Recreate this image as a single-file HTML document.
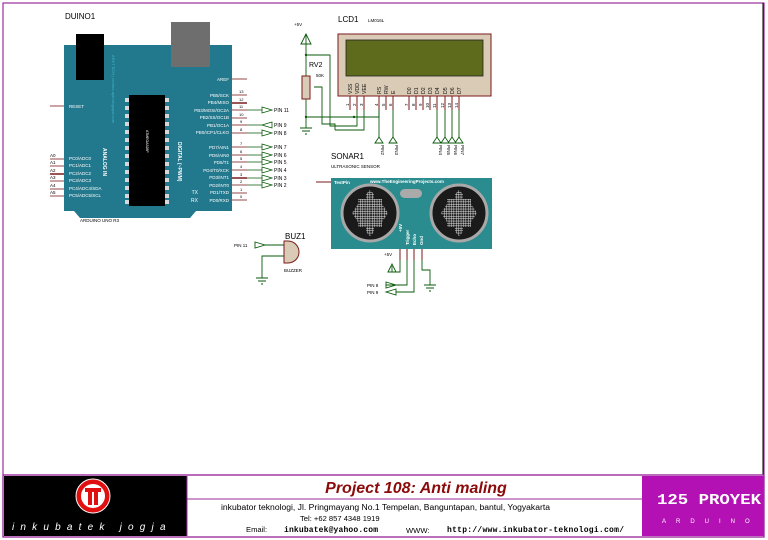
<!DOCTYPE html>
<html><head><meta charset="utf-8"><style>
html,body{margin:0;padding:0;background:#fff;width:768px;height:540px;overflow:hidden}
svg{display:block}
text{font-family:"Liberation Sans",sans-serif}
</style></head><body>
<svg width="768" height="540" viewBox="0 0 768 540" xmlns="http://www.w3.org/2000/svg">
<defs>
<pattern id="grid" width="2.4" height="2.4" patternUnits="userSpaceOnUse">
<rect width="2.4" height="2.4" fill="#222"/>
<path d="M0 0H2.4M0 0V2.4" stroke="#e8e8e8" stroke-width="0.9"/>
</pattern>
</defs>
<rect x="3" y="3" width="761" height="534" fill="#fff" stroke="#9b2d9b" stroke-width="1.2"/>
<line x1="763" y1="3" x2="763" y2="475" stroke="#000" stroke-width="1"/>

<!-- Arduino -->
<text x="65" y="19" font-size="8">DUINO1</text>
<path d="M64 45 H232 V211 H196 L190 218 H80 L74 211 H64 Z" fill="#22788c"/>
<rect x="76" y="34" width="28" height="46" fill="#000"/>
<rect x="171" y="22" width="39" height="45" fill="#6e6e6e"/>
<rect x="129" y="95" width="36" height="111" fill="#000"/>
<g fill="#d8d8d8">
<rect x="125" y="98" width="4" height="4"/><rect x="125" y="106" width="4" height="4"/><rect x="125" y="114" width="4" height="4"/><rect x="125" y="122" width="4" height="4"/><rect x="125" y="130" width="4" height="4"/><rect x="125" y="138" width="4" height="4"/><rect x="125" y="146" width="4" height="4"/><rect x="125" y="154" width="4" height="4"/><rect x="125" y="162" width="4" height="4"/><rect x="125" y="170" width="4" height="4"/><rect x="125" y="178" width="4" height="4"/><rect x="125" y="186" width="4" height="4"/><rect x="125" y="194" width="4" height="4"/><rect x="125" y="200" width="4" height="4"/>
<rect x="165" y="98" width="4" height="4"/><rect x="165" y="106" width="4" height="4"/><rect x="165" y="114" width="4" height="4"/><rect x="165" y="122" width="4" height="4"/><rect x="165" y="130" width="4" height="4"/><rect x="165" y="138" width="4" height="4"/><rect x="165" y="146" width="4" height="4"/><rect x="165" y="154" width="4" height="4"/><rect x="165" y="162" width="4" height="4"/><rect x="165" y="170" width="4" height="4"/><rect x="165" y="178" width="4" height="4"/><rect x="165" y="186" width="4" height="4"/><rect x="165" y="194" width="4" height="4"/><rect x="165" y="200" width="4" height="4"/>
</g>
<text transform="translate(112,55) rotate(90)" font-size="4" fill="#3fb8cc">ARKT ECH | techno-apk.blogspot.com</text>
<text transform="translate(103,148) rotate(90)" font-size="5" font-weight="bold" fill="#fff">ANALOG IN</text>
<text transform="translate(178,142) rotate(90)" font-size="5" font-weight="bold" fill="#fff">DIGITAL (~PWM)</text>
<text transform="translate(146,130) rotate(90)" font-size="3.5" fill="#fff">ATMEGA328P</text>
<g font-size="4.5" fill="#fff" text-anchor="end">
<text x="229" y="81">AREF</text>
<text x="229" y="97">PB5/SCK</text><text x="229" y="104">PB4/MISO</text><text x="229" y="112">PB3/MOSI/OC2A</text><text x="229" y="119">PB2/SS/OC1B</text><text x="229" y="127">PB1/OC1A</text><text x="229" y="134">PB0/ICP1/CLKO</text>
<text x="229" y="149">PD7/AIN1</text><text x="229" y="157">PD6/AIN0</text><text x="229" y="164">PD5/T1</text><text x="229" y="172">PD4/T0/XCK</text><text x="229" y="179">PD3/INT1</text><text x="229" y="187">PD2/INT0</text><text x="229" y="194">PD1/TXD</text><text x="229" y="202">PD0/RXD</text>
<text x="198" y="194" font-size="5">TX</text><text x="198" y="202" font-size="5">RX</text>
</g>
<g font-size="4.5" fill="#fff">
<text x="69" y="108">RESET</text>
<text x="69" y="160">PC0/ADC0</text><text x="69" y="167">PC1/ADC1</text><text x="69" y="175">PC2/ADC2</text><text x="69" y="182">PC3/ADC3</text><text x="69" y="190">PC4/ADC4/SDA</text><text x="69" y="197">PC5/ADC5/SCL</text>
</g>
<g font-size="4.5"><text x="50" y="157">A0</text><text x="50" y="164">A1</text><text x="50" y="172">A2</text><text x="50" y="179">A3</text><text x="50" y="187">A4</text><text x="50" y="194">A5</text>
<text x="80" y="222">ARDUINO UNO R3</text></g>
<g stroke="#7a1a1a" stroke-width="0.8">
<line x1="50" y1="106" x2="64" y2="106"/>
<line x1="50" y1="159" x2="64" y2="159"/><line x1="50" y1="166" x2="64" y2="166"/><line x1="50" y1="174" x2="64" y2="174" stroke-width="1.5"/><line x1="50" y1="181" x2="64" y2="181"/><line x1="50" y1="189" x2="64" y2="189"/><line x1="50" y1="196" x2="64" y2="196"/>
<line x1="232" y1="79" x2="247" y2="79"/>
<line x1="232" y1="95" x2="247" y2="95"/><line x1="232" y1="103" x2="247" y2="103" stroke-width="1.5"/><line x1="232" y1="110" x2="247" y2="110"/><line x1="232" y1="118" x2="247" y2="118"/><line x1="232" y1="125" x2="247" y2="125"/><line x1="232" y1="133" x2="247" y2="133"/>
<line x1="232" y1="147" x2="247" y2="147"/><line x1="232" y1="155" x2="247" y2="155"/><line x1="232" y1="162" x2="247" y2="162"/><line x1="232" y1="170" x2="247" y2="170"/><line x1="232" y1="178" x2="247" y2="178" stroke-width="1.5"/><line x1="232" y1="185" x2="247" y2="185"/><line x1="232" y1="193" x2="247" y2="193"/><line x1="232" y1="200" x2="247" y2="200"/>
</g>
<g font-size="4" fill="#000">
<text x="239" y="93">13</text><text x="239" y="101">12</text><text x="239" y="108">11</text><text x="239" y="116">10</text><text x="240" y="123">9</text><text x="240" y="131">8</text><text x="240" y="145">7</text><text x="240" y="153">6</text><text x="240" y="160">5</text><text x="240" y="168">4</text><text x="240" y="176">3</text><text x="240" y="183">2</text><text x="240" y="191">1</text><text x="240" y="198">0</text>
</g>
<g stroke="#0a5a0a" stroke-width="0.8" fill="none">
<path d="M247 110H262M262 107L272 110L262 113Z"/>
<path d="M247 125H262M272 122L262 125L272 128Z"/>
<path d="M247 133H262M262 130L272 133L262 136Z"/>
<path d="M247 147H262M262 144L272 147L262 150Z"/>
<path d="M247 155H262M262 152L272 155L262 158Z"/>
<path d="M247 162H262M262 159L272 162L262 165Z"/>
<path d="M247 170H262M262 167L272 170L262 173Z"/>
<path d="M247 178H262M262 175L272 178L262 181Z"/>
<path d="M247 185H262M262 182L272 185L262 188Z"/>
</g>
<g font-size="5"><text x="274" y="112">PIN 11</text><text x="274" y="127">PIN 9</text><text x="274" y="135">PIN 8</text><text x="274" y="149">PIN 7</text><text x="274" y="157">PIN 6</text><text x="274" y="164">PIN 5</text><text x="274" y="172">PIN 4</text><text x="274" y="180">PIN 3</text><text x="274" y="187">PIN 2</text></g>

<!-- LCD -->
<text x="338" y="22" font-size="8">LCD1</text><text x="368" y="22" font-size="4.5">LM016L</text>
<rect x="338" y="34" width="153" height="62" fill="#d9cbb5" stroke="#7a1a1a" stroke-width="1"/>
<rect x="346" y="40" width="137" height="36" fill="#5e6b1c" stroke="#222" stroke-width="0.8"/>
<g font-size="5.2" fill="#111">
<text transform="translate(352,94) rotate(-90)">VSS</text><text transform="translate(359,94) rotate(-90)">VDD</text><text transform="translate(366,94) rotate(-90)">VEE</text>
<text transform="translate(381,94) rotate(-90)">RS</text><text transform="translate(388,94) rotate(-90)">RW</text><text transform="translate(395,94) rotate(-90)">E</text>
<text transform="translate(411,94) rotate(-90)">D0</text><text transform="translate(418,94) rotate(-90)">D1</text><text transform="translate(425,94) rotate(-90)">D2</text><text transform="translate(432,94) rotate(-90)">D3</text><text transform="translate(439,94) rotate(-90)">D4</text><text transform="translate(447,94) rotate(-90)">D5</text><text transform="translate(454,94) rotate(-90)">D6</text><text transform="translate(461,94) rotate(-90)">D7</text>
</g>
<g stroke="#7a1a1a" stroke-width="1">
<line x1="350" y1="96" x2="350" y2="110"/><line x1="357" y1="96" x2="357" y2="110"/><line x1="364" y1="96" x2="364" y2="110"/>
<line x1="379" y1="96" x2="379" y2="110"/><line x1="386" y1="96" x2="386" y2="110"/><line x1="393" y1="96" x2="393" y2="110"/>
<line x1="409" y1="96" x2="409" y2="110"/><line x1="416" y1="96" x2="416" y2="110"/><line x1="423" y1="96" x2="423" y2="110"/><line x1="430" y1="96" x2="430" y2="110"/><line x1="437" y1="96" x2="437" y2="110"/><line x1="445" y1="96" x2="445" y2="110"/><line x1="452" y1="96" x2="452" y2="110"/><line x1="459" y1="96" x2="459" y2="110"/>
</g>
<g font-size="4.5"><text transform="translate(349,106) rotate(-90)">1</text><text transform="translate(356,106) rotate(-90)">2</text><text transform="translate(363,106) rotate(-90)">3</text><text transform="translate(378,106) rotate(-90)">4</text><text transform="translate(385,106) rotate(-90)">5</text><text transform="translate(392,106) rotate(-90)">6</text><text transform="translate(408,106) rotate(-90)">7</text><text transform="translate(415,106) rotate(-90)">8</text><text transform="translate(422,106) rotate(-90)">9</text><text transform="translate(429,108) rotate(-90)">10</text><text transform="translate(436,108) rotate(-90)">11</text><text transform="translate(444,108) rotate(-90)">12</text><text transform="translate(451,108) rotate(-90)">13</text><text transform="translate(458,108) rotate(-90)">14</text></g>
<g stroke="#0a5a0a" stroke-width="0.9" fill="none">
<path d="M306 34V117M301 44L306 34L311 44Z"/>
<path d="M306 55H330V126H357V110"/>
<path d="M306 117H379V110"/>
<path d="M364 110V130H335"/>
<path d="M314 87H322V124H335V130"/>
<path d="M306 117V128M300 128H312M302 131H310M305 134H307"/>
<path d="M379 110V137M393 110V137"/>
<path d="M445 110V137M452 110V137M459 110V137M437 110V137"/>
<path d="M379 137L375 143H383ZM393 137L389 143H397ZM437 137L433 143H441ZM445 137L441 143H449ZM452 137L448 143H456ZM459 137L455 143H463Z"/>
</g>
<circle cx="306" cy="55" r="1.2" fill="#0a5a0a"/><circle cx="306" cy="117" r="1.2" fill="#0a5a0a"/><circle cx="354" cy="117" r="1.2" fill="#0a5a0a"/>
<rect x="302" y="76" width="8" height="23" fill="#d9cbb5" stroke="#7a1a1a" stroke-width="1"/>
<text x="294" y="26" font-size="4.5">+5V</text>
<text x="309" y="67" font-size="7">RV2</text><text x="316" y="77" font-size="4.5">50K</text>
<g font-size="4.5"><text transform="translate(381,145) rotate(90)">PIN2</text><text transform="translate(395,145) rotate(90)">PIN3</text><text transform="translate(439,145) rotate(90)">PIN4</text><text transform="translate(447,145) rotate(90)">PIN5</text><text transform="translate(454,145) rotate(90)">PIN6</text><text transform="translate(461,145) rotate(90)">PIN7</text></g>

<!-- Sonar -->
<text x="331" y="159" font-size="8">SONAR1</text><text x="331" y="168" font-size="4.5">ULTRASONIC SENSOR</text>
<line x1="316" y1="182" x2="331" y2="182" stroke="#7a1a1a" stroke-width="1"/>
<rect x="331" y="178" width="161" height="71" fill="#2a8c8f"/>
<text x="334" y="184" font-size="4.5" font-weight="bold" fill="#fff">TestPin</text>
<text x="370" y="183" font-size="4.5" font-weight="bold" fill="#fff">www.TheEngineeringProjects.com</text>
<rect x="400" y="189" width="22" height="9" rx="4.5" fill="#aaa"/>
<circle cx="370" cy="213" r="28" fill="#1a1a1a" stroke="#a8a8a8" stroke-width="3"/>
<circle cx="459" cy="213" r="28" fill="#1a1a1a" stroke="#a8a8a8" stroke-width="3"/>
<path d="M370 190L374 194V199H382V204L388 213L382 222V227H374V232L370 236L366 232V227H358V222L352 213L358 204V199H366V194Z" fill="url(#grid)"/>
<path d="M459 190L463 194V199H471V204L477 213L471 222V227H463V232L459 236L455 232V227H447V222L441 213L447 204V199H455V194Z" fill="url(#grid)"/>
<g font-size="4.5" fill="#fff" font-weight="bold"><text transform="translate(402,232) rotate(-90)">+5V</text><text transform="translate(409,245) rotate(-90)">Trigger</text><text transform="translate(416,245) rotate(-90)">Echo</text><text transform="translate(423,245) rotate(-90)">Gnd</text></g>
<g stroke="#7a1a1a" stroke-width="1"><line x1="400" y1="249" x2="400" y2="260"/><line x1="407" y1="249" x2="407" y2="260"/><line x1="414" y1="249" x2="414" y2="260"/><line x1="422" y1="249" x2="422" y2="260"/></g>
<g stroke="#0a5a0a" stroke-width="0.9" fill="none">
<path d="M400 260V272H392V266M388 272L392 264L396 272Z"/>
<path d="M407 260V285H386M386 282L396 285L386 288Z"/>
<path d="M414 260V292H396M396 289L386 292L396 295Z"/>
<path d="M422 260V270H430V285M424 285H436M426 288H434M429 291H431"/>
</g>
<text x="384" y="256" font-size="4.5">+5V</text>
<text x="367" y="287" font-size="4.5">PIN 8</text><text x="367" y="294" font-size="4.5">PIN 9</text>

<!-- Buzzer -->
<text x="285" y="239" font-size="8">BUZ1</text>
<text x="234" y="247" font-size="4.5">PIN 11</text>
<g stroke="#0a5a0a" stroke-width="0.9" fill="none">
<path d="M255 242L265 245L255 248Z M265 245H284"/>
<path d="M284 256H262V278M256 278H268M258 281H266M261 284H263"/>
</g>
<path d="M284 241H288A10 10 0 0 1 288 263H284Z" fill="#d9cbb5" stroke="#7a1a1a" stroke-width="1"/>
<text x="284" y="272" font-size="4.5">BUZZER</text>

<!-- Footer -->
<line x1="3" y1="475" x2="764" y2="475" stroke="#9b2d9b" stroke-width="1.2"/>
<rect x="4" y="476" width="183" height="60" fill="#000"/>
<circle cx="93" cy="496" r="17" fill="#e01010" stroke="#fff" stroke-width="1"/>
<circle cx="93" cy="496" r="12" fill="#fff"/>
<path d="M85 488H101V492H98V505H94V492H92V505H88V492H85Z" fill="#e01010"/>
<text x="12" y="530" font-size="10" font-style="italic" fill="#fff" letter-spacing="6.2">inkubatek jogja</text>
<line x1="187" y1="476" x2="187" y2="536" stroke="#9b2d9b"/>
<line x1="187" y1="499" x2="642" y2="499" stroke="#9b2d9b"/>
<text x="416" y="493" font-size="16" font-style="italic" font-weight="bold" fill="#8b0a0a" text-anchor="middle">Project 108: Anti maling</text>
<text x="221" y="510" font-size="7.9" textLength="329" lengthAdjust="spacingAndGlyphs">inkubator teknologi, Jl. Pringmayang No.1 Tempelan, Banguntapan, bantul, Yogyakarta</text>
<text x="300" y="521" font-size="7.6">Tel:  +62 857 4348 1919</text>
<text x="246" y="532" font-size="7.6">Email:</text>
<text x="284" y="532" font-size="8" font-weight="bold" textLength="94" style="font-family:'Liberation Mono',monospace">inkubatek@yahoo.com</text>
<text x="406" y="533" font-size="7.6">WWW:</text>
<text x="447" y="532" font-size="8" font-weight="bold" textLength="177" style="font-family:'Liberation Mono',monospace">http://www.inkubator-teknologi.com/</text>
<rect x="642" y="476" width="122" height="60" fill="#b311b3"/>
<text x="657" y="504" font-size="15" font-weight="bold" fill="#fff" textLength="104" lengthAdjust="spacingAndGlyphs" style="font-family:'Liberation Mono',monospace">125 PROYEK</text>
<text x="662" y="523" font-size="6" fill="#fff" letter-spacing="10">ARDUINO</text>
<rect x="3" y="475" width="761" height="62" fill="none" stroke="#9b2d9b" stroke-width="1.2"/>
</svg>
</body></html>
